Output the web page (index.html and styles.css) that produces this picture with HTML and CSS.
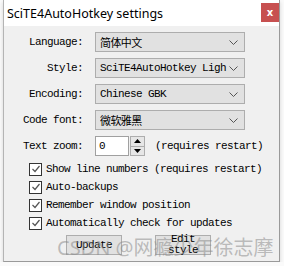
FILE: index.html
```html
<!DOCTYPE html>
<html lang="en">
<head>
    <meta charset="UTF-8">
    <title>SciTE4AutoHotkey settings</title>
    <link rel="stylesheet" href="styles.css">
</head>
<body>
    <div class="window">
        <div class="titlebar">
            <span class="title">SciTE4AutoHotkey settings</span>
            <span class="close">x</span>
        </div>
        <div class="client">
            <div class="form">
                <span class="label">Language:</span>
                <div class="select"><span>简体中文</span><svg width="9" height="5" viewBox="0 0 9 5"><polyline points="0.5,0.5 4.5,4.5 8.5,0.5" fill="none" stroke="#555"/></svg></div>

                <span class="label">Style:</span>
                <div class="select"><span>SciTE4AutoHotkey Ligh</span><svg width="9" height="5" viewBox="0 0 9 5"><polyline points="0.5,0.5 4.5,4.5 8.5,0.5" fill="none" stroke="#555"/></svg></div>

                <span class="label">Encoding:</span>
                <div class="select"><span>Chinese GBK</span><svg width="9" height="5" viewBox="0 0 9 5"><polyline points="0.5,0.5 4.5,4.5 8.5,0.5" fill="none" stroke="#555"/></svg></div>

                <span class="label">Code font:</span>
                <div class="select"><span>微软雅黑</span><svg width="9" height="5" viewBox="0 0 9 5"><polyline points="0.5,0.5 4.5,4.5 8.5,0.5" fill="none" stroke="#555"/></svg></div>

                <span class="label">Text zoom:</span>
                <div class="zoom-row">
                    <div class="edit">0</div>
                    <div class="spin">
                        <div class="spin-btn"><svg width="7" height="4" viewBox="0 0 7 4"><polygon points="3.5,0 7,4 0,4" fill="#000"/></svg></div>
                        <div class="spin-btn"><svg width="7" height="4" viewBox="0 0 7 4"><polygon points="0,0 7,0 3.5,4" fill="#000"/></svg></div>
                    </div>
                    <span class="note">(requires restart)</span>
                </div>
            </div>

            <div class="checks">
                <div class="check"><span class="box"><svg width="10" height="10" viewBox="0 0 10 10"><polyline points="1.5,5 4,7.5 8.5,2" fill="none" stroke="#555" stroke-width="1.2"/></svg></span>Show line numbers (requires restart)</div>
                <div class="check"><span class="box"><svg width="10" height="10" viewBox="0 0 10 10"><polyline points="1.5,5 4,7.5 8.5,2" fill="none" stroke="#555" stroke-width="1.2"/></svg></span>Auto-backups</div>
                <div class="check"><span class="box"><svg width="10" height="10" viewBox="0 0 10 10"><polyline points="1.5,5 4,7.5 8.5,2" fill="none" stroke="#555" stroke-width="1.2"/></svg></span>Remember window position</div>
                <div class="check"><span class="box"><svg width="10" height="10" viewBox="0 0 10 10"><polyline points="1.5,5 4,7.5 8.5,2" fill="none" stroke="#555" stroke-width="1.2"/></svg></span>Automatically check for updates</div>
            </div>

            <div class="buttons">
                <div class="button">Update</div>
                <div class="button two-line">Edit<br>style</div>
                <span class="watermark">CSDN @网瘾少年徐志摩</span>
            </div>
        </div>
    </div>
</body>
</html>
```

FILE: styles.css
```css
body {
    margin: 0;
    background-color: #fafafa;
    font-family: 'Liberation Mono', monospace;
    font-size: 11px;
    letter-spacing: -0.6px;
    color: #000;
}

.window {
    margin-left: 3px;
    width: 275px;
    height: 261px;
    border-left: 1px solid #b4b4b4;
    border-right: 1px solid #9a9a9a;
    border-bottom: 1px solid #9a9a9a;
    box-shadow: 0 2px 4px rgba(0, 0, 0, 0.15);
    display: flex;
    flex-direction: column;
}

.titlebar {
    height: 26px;
    background-color: #fff;
    display: flex;
    align-items: flex-start;
}

.title {
    font-family: 'Noto Sans', sans-serif;
    font-size: 12.5px;
    letter-spacing: 0;
    margin: 5px 0 0 3px;
}

.close {
    margin: 3px 0 0 auto;
    width: 18px;
    height: 19px;
    background-color: #c75050;
    color: #fff;
    font-family: 'DejaVu Sans', sans-serif;
    font-weight: bold;
    font-size: 10px;
    letter-spacing: 0;
    display: flex;
    align-items: center;
    justify-content: center;
}

.client {
    flex: 1;
    background-color: #f0f0f0;
    padding-top: 6px;
}

.form {
    display: grid;
    grid-template-columns: 79px 150px;
    column-gap: 12px;
    row-gap: 6px;
    align-items: center;
}

.label {
    text-align: right;
}

.select {
    height: 18px;
    border: 1px solid #adadad;
    background-color: #e1e1e1;
    display: flex;
    align-items: center;
    padding: 0 6px 0 4px;
    overflow: hidden;
    white-space: nowrap;
}

.select span {
    flex: 1;
    overflow: hidden;
    font-family: 'Liberation Mono', 'Noto Sans CJK SC', monospace;
}

.select svg {
    flex: none;
}

.zoom-row {
    display: flex;
    align-items: center;
    height: 20px;
    white-space: nowrap;
}

.edit {
    flex: none;
    width: 29px;
    height: 18px;
    border: 1px solid #a0a0a0;
    background-color: #fff;
    padding-left: 3px;
    line-height: 18px;
}

.spin {
    flex: none;
    width: 15px;
    height: 20px;
    display: flex;
    flex-direction: column;
    margin-left: 1px;
}

.spin-btn {
    flex: 1;
    border: 1px solid #adadad;
    background-color: #e6e6e6;
    display: flex;
    align-items: center;
    justify-content: center;
}

.spin-btn + .spin-btn {
    border-top: none;
}

.note {
    flex: none;
    margin-left: 10px;
}

.checks {
    margin-top: 4px;
    padding-left: 25px;
}

.check {
    height: 18px;
    display: flex;
    align-items: center;
    white-space: nowrap;
}

.box {
    width: 11px;
    height: 11px;
    border: 1px solid #333;
    background-color: #fff;
    margin-right: 4px;
    display: flex;
    align-items: center;
    justify-content: center;
}

.buttons {
    margin-top: 3px;
    padding-left: 62px;
    display: flex;
    gap: 33px;
    position: relative;
}

.button {
    width: 54px;
    height: 18px;
    border: 1px solid #adadad;
    background-color: #e1e1e1;
    display: flex;
    align-items: center;
    justify-content: center;
    text-align: center;
}

.two-line {
    line-height: 11px;
}

.watermark {
    position: absolute;
    left: 53px;
    top: -3px;
    font-family: 'Noto Sans', 'Noto Sans CJK SC', sans-serif;
    font-size: 20px;
    letter-spacing: 0;
    color: rgba(140, 140, 140, 0.55);
    white-space: nowrap;
}
```
